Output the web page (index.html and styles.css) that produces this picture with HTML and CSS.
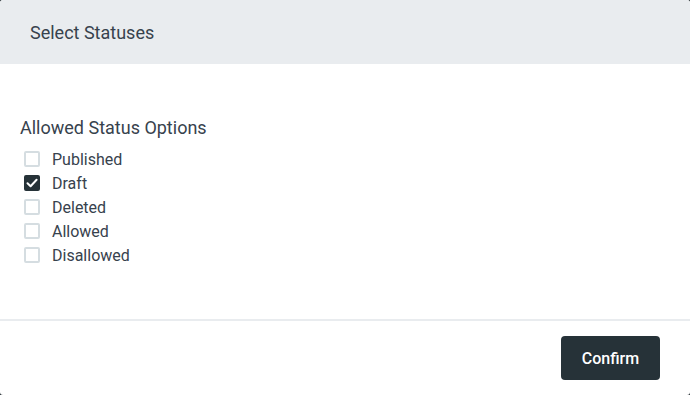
FILE: index.html
```html
<!DOCTYPE html>
<html>
<head>
<meta charset="utf-8">
<link rel="stylesheet" href="styles.css">
</head>
<body>
<div class="modal">
  <div class="modal-header">Select Statuses</div>
  <div class="modal-body">
    <div class="group-label">Allowed Status Options</div>
    <ul class="options">
      <li class="option"><span class="box"></span><span>Published</span></li>
      <li class="option"><span class="box checked"><svg viewBox="0 0 16 16" width="16" height="16"><path d="M3.5 8.2 L6.6 11.2 L12.6 4.8" fill="none" stroke="#fff" stroke-width="2" stroke-linecap="round" stroke-linejoin="round"/></svg></span><span>Draft</span></li>
      <li class="option"><span class="box"></span><span>Deleted</span></li>
      <li class="option"><span class="box"></span><span>Allowed</span></li>
      <li class="option"><span class="box"></span><span>Disallowed</span></li>
    </ul>
  </div>
  <div class="modal-footer">
    <button class="btn-confirm">Confirm</button>
  </div>
</div>
</body>
</html>
```
FILE: styles.css
```css
html, body {
  margin: 0;
  padding: 0;
  height: 100%;
}
body {
  background: #2b3338;
  font-family: Roboto, "Liberation Sans", sans-serif;
}
.modal {
  width: 690px;
  height: 395px;
  background: #fff;
  border-radius: 3px;
  overflow: hidden;
  display: flex;
  flex-direction: column;
}
.modal-header {
  height: 64px;
  box-sizing: border-box;
  background: #e9ecef;
  padding: 0 30px;
  display: flex;
  align-items: center;
  font-size: 18px;
  color: #37424d;
}
.modal-body {
  flex: 1;
  padding: 53px 20px 0;
  border-bottom: 2px solid #e9ecef;
}
.group-label {
  font-size: 18px;
  color: #37424d;
  line-height: 22px;
  margin-bottom: 8px;
}
.options {
  list-style: none;
  margin: 0;
  padding: 0 0 0 4px;
}
.option {
  height: 24px;
  display: flex;
  align-items: center;
  gap: 12px;
  font-size: 16px;
  color: #37424d;
}
.box {
  width: 16px;
  height: 16px;
  box-sizing: border-box;
  border: 2px solid #d5dde1;
  border-radius: 2px;
  background: #fff;
  display: flex;
}
.box.checked {
  background: #263238;
  border-color: #263238;
  align-items: center;
  justify-content: center;
}
.box.checked svg {
  flex: none;
}
.modal-footer {
  height: 74px;
  box-sizing: border-box;
  display: flex;
  justify-content: flex-end;
  align-items: center;
  padding: 0 30px 0;
}
.btn-confirm {
  width: 99px;
  height: 44px;
  background: #263238;
  color: #fff;
  border: none;
  border-radius: 4px;
  font-family: Roboto, "Liberation Sans", sans-serif;
  font-size: 16px;
  font-weight: 500;
}
```
